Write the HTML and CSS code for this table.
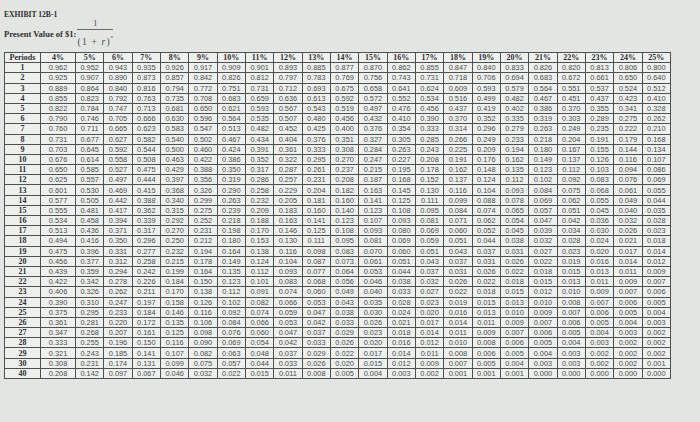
FILE: index.html
```html
<!DOCTYPE html>
<html lang="en">
<head>
<meta charset="utf-8">
<title>Exhibit 12B-1 Present Value of $1</title>
<link rel="stylesheet" href="styles.css">
</head>
<body>
<div class="page">
  <header class="heading">
    <h1 class="exhibit">EXHIBIT 12B-1</h1>
    <div class="subtitle">
      <span class="subtitle-text">Present Value of $1:</span>
      <span class="frac">
        <span class="frac-num">1</span>
        <span class="frac-den">(1 + <i>r</i>)<sup>n</sup></span>
      </span>
    </div>
  </header>
  <table class="pv">
    <colgroup>
      <col class="col-period">
      <col class="col-first">
    </colgroup>
    <thead>
      <tr>
        <th>Periods</th><th>4%</th><th>5%</th><th>6%</th><th>7%</th><th>8%</th><th>9%</th><th>10%</th><th>11%</th><th>12%</th><th>13%</th><th>14%</th><th>15%</th><th>16%</th><th>17%</th><th>18%</th><th>19%</th><th>20%</th><th>21%</th><th>22%</th><th>23%</th><th>24%</th><th>25%</th>
      </tr>
    </thead>
    <tbody id="pv-body"></tbody>
  </table>
</div>
<script src="script.js"></script>
</body>
</html>
```

FILE: styles.css
```css
html, body {
  margin: 0;
  padding: 0;
  background: #e3e5e2;
}
.page {
  padding: 0 4px;
  width: 667px;
}
.heading {
  padding-top: 9px;
  color: #2e2f33;
  font-family: "Liberation Serif", "Times New Roman", serif;
  font-weight: bold;
}
.exhibit {
  margin: 0;
  font-size: 7.6px;
  line-height: 11px;
  font-weight: bold;
}
.subtitle {
  display: flex;
  align-items: center;
  height: 26px;
  gap: 1px;
}
.subtitle-text {
  font-size: 8.5px;
  line-height: 10px;
  padding-top: 2px;
}
.frac {
  display: inline-flex;
  flex-direction: column;
  align-items: center;
  width: 36px;
  font-weight: normal;
  color: #4a4b4e;
}
.frac-num {
  font-size: 8px;
  line-height: 11px;
  border-bottom: 1px solid #6a6b6d;
  width: 100%;
  text-align: center;
}
.frac-den {
  font-size: 9.5px;
  line-height: 13px;
  letter-spacing: 1.2px;
}
.frac-den sup {
  font-size: 4.5px;
  vertical-align: 7px;
  letter-spacing: 0;
}
.pv {
  margin-top: 6px;
  width: 667px;
  table-layout: fixed;
  border-collapse: collapse;
  background: #eef0ed;
}
.col-period { width: 36px; }
.col-first { width: 35px; }
.pv th,
.pv td {
  border: 1px solid #4f5052;
  padding: 0;
  height: 9.2px;
  line-height: 9px;
  text-align: center;
  white-space: nowrap;
  overflow: hidden;
}
.pv th {
  font-family: "Liberation Serif", "Times New Roman", serif;
  font-weight: bold;
  font-size: 8px;
  color: #2e2f33;
}
.pv td {
  font-family: "Liberation Sans", Arial, sans-serif;
  font-size: 7.4px;
  color: #4c4e50;
}
```

FILE: script.js
```js
(function () {
  var rates = [];
  for (var r = 4; r <= 25; r++) rates.push(r);
  var periods = [];
  for (var p = 1; p <= 30; p++) periods.push(p);
  periods.push(40);
  var body = document.getElementById('pv-body');
  periods.forEach(function (n) {
    var tr = document.createElement('tr');
    var th = document.createElement('th');
    th.textContent = String(n);
    tr.appendChild(th);
    rates.forEach(function (rate) {
      var v = 1 / Math.pow(1 + rate / 100, n);
      var td = document.createElement('td');
      td.textContent = (Math.round(v * 1000 + 1e-9) / 1000).toFixed(3);
      tr.appendChild(td);
    });
    body.appendChild(tr);
  });
})();
```
